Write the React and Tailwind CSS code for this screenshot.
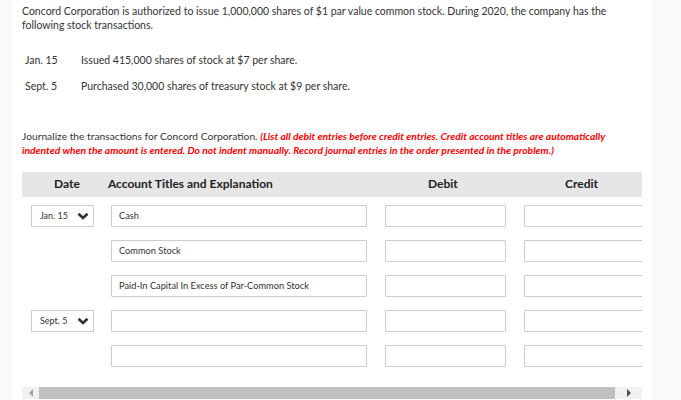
const entries = [
  { date: 'Jan. 15', account: 'Cash' },
  { date: '', account: 'Common Stock' },
  { date: '', account: 'Paid-In Capital In Excess of Par-Common Stock' },
  { date: 'Sept. 5', account: '' },
  { date: '', account: '' },
];

function DateSelect({ value }) {
  return (
    <div className="w-[63px] h-[22px] border border-[#cccccc] bg-white flex items-center justify-between pl-[8px] pr-[4px] text-[9px] text-[#333]">
      <span>{value}</span>
      <svg width="12" height="8" viewBox="0 0 12 8">
        <path d="M1.5 1.8 L6 6 L10.5 1.8" fill="none" stroke="#333" strokeWidth="2.6" />
      </svg>
    </div>
  );
}

function Field({ width, value }) {
  return (
    <div className={`${width} h-[22px] border border-[#cccccc] rounded-[1px] bg-white flex items-center pl-[7px] text-[9.25px] text-[#333] shrink-0`}>
      {value}
    </div>
  );
}

export default function App() {
  return (
    <div className="min-h-screen bg-[#fafafa] pl-[12px]" style={{ fontFamily: 'Lato, "Open Sans", sans-serif' }}>
      <div className="w-[640px] min-h-[400px] bg-white px-[10px] pt-[5px] text-[#333]">
        {/* Problem statement */}
        <p className="text-[10.5px] leading-[13.5px] pr-[20px]">
          Concord Corporation is authorized to issue 1,000,000 shares of $1 par value common stock. During 2020, the company has the following stock transactions.
        </p>

        <div className="mt-[21px] text-[10.5px] leading-[14px]">
          <div className="flex items-center h-[14px]">
            <span className="w-[59px] pl-[3px]">Jan. 15</span>
            <span>Issued 415,000 shares of stock at $7 per share.</span>
          </div>
          <div className="flex items-center h-[14px] mt-[11.5px]">
            <span className="w-[59px] pl-[3px]">Sept. 5</span>
            <span>Purchased 30,000 shares of treasury stock at $9 per share.</span>
          </div>
        </div>

        <p className="mt-[36px] text-[10.25px] leading-[14px] pr-[10px]">
          Journalize the transactions for Concord Corporation.{' '}
          <span className="italic font-bold text-[#ff0000]">
            (List all debit entries before credit entries. Credit account titles are automatically indented when the amount is entered. Do not indent manually. Record journal entries in the order presented in the problem.)
          </span>
        </p>

        {/* Journal table */}
        <div className="mt-[15px] w-[620px] overflow-hidden">
          <div className="w-[660px]">
            <div className="flex items-center h-[25px] bg-[#e6e6e6] w-[620px] text-[12px] font-bold text-[#222]">
              <span className="w-[81px] pl-[9px] text-center">Date</span>
              <span className="w-[256px] ml-[5px]">Account Titles and Explanation</span>
              <span className="w-[121px] ml-[19px] text-center">Debit</span>
              <span className="w-[121px] ml-[18px] text-center">Credit</span>
            </div>
            <div className="pt-[8px]">
              {entries.map((e, i) => (
                <div key={i} className="flex h-[35px]">
                  <div className="w-[72px] pl-[9px] shrink-0">
                    {e.date && <DateSelect value={e.date} />}
                  </div>
                  <div className="ml-[17px]">
                    <Field width="w-[256px]" value={e.account} />
                  </div>
                  <div className="ml-[18px]">
                    <Field width="w-[121px]" value="" />
                  </div>
                  <div className="ml-[18px]">
                    <Field width="w-[121px]" value="" />
                  </div>
                </div>
              ))}
            </div>
          </div>
        </div>

        {/* Fake horizontal scrollbar */}
        <div className="mt-[7px] w-[620px] h-[12px] bg-[#f1f1f1] flex items-center">
          <div className="w-[17px] flex justify-center">
            <div className="w-0 h-0 border-y-[4px] border-y-transparent border-r-[4px] border-r-[#a3a3a3]" />
          </div>
          <div className="w-[576px] h-[12px] bg-[#c1c1c1]" />
          <div className="flex-1 flex justify-center">
            <div className="w-0 h-0 border-y-[4px] border-y-transparent border-l-[4px] border-l-[#505050]" />
          </div>
        </div>
      </div>
    </div>
  );
}
